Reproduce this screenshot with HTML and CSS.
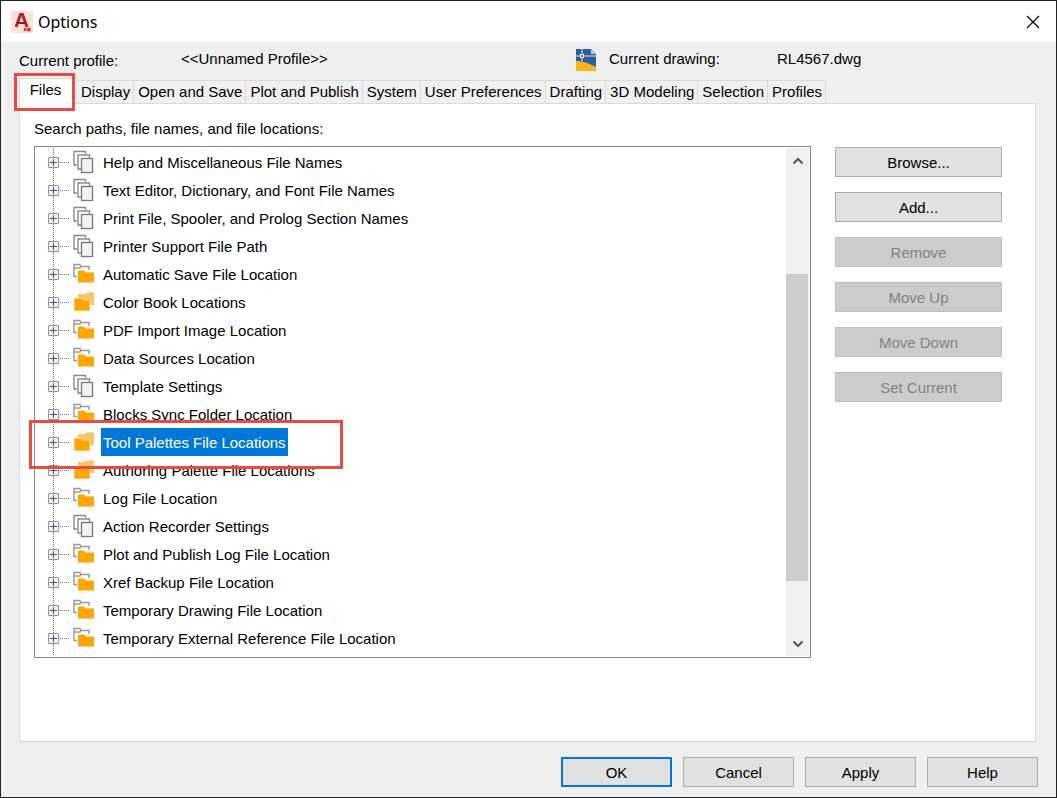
FILE: index.html
```
<!DOCTYPE html>
<html lang="en">
<head>
  <meta charset="utf-8">
  <title>Options</title>
  <link rel="stylesheet" href="styles.css">
</head>
<body>
  <!-- shared icons -->
  <svg class="sprite" aria-hidden="true">
    <symbol id="files" viewBox="0 0 22 24">
      <path d="M4 15H1V1.500H12.500V4" fill="none" stroke="#8a8a8a" stroke-width="1.400"/>
      <path d="M8 19H5V5H16.500V8" fill="none" stroke="#8a8a8a" stroke-width="1.400"/>
      <rect x="8.500" y="8.500" width="11" height="14" fill="#f3f3f3" stroke="#777" stroke-width="1.300"/>
    </symbol>
    <symbol id="folder" viewBox="0 0 22 24">
      <path d="M4 14.500H1V2.500H7L8 4.500H16V8M1 6H7L8 4.500" fill="none" stroke="#999" stroke-width="1.400"/>
      <path d="M5 8.500H11L13 10.500H21V20.500H5Z" fill="#ffa500"/>
    </symbol>
    <symbol id="folders" viewBox="0 0 22 24">
      <path d="M5 4H12L14 2.500H21V15H5Z" fill="#fbc566"/>
      <path d="M1 8H8L10 10H17V21H1Z" fill="#ffa500" stroke="#fff" stroke-width=".6"/>
    </symbol>
  </svg>

  <div class="window">
    <header class="titlebar">
      <svg class="app-icon" viewBox="0 0 22 22">
        <rect width="22" height="22" fill="#fbe3da"/>
        <path d="M5 16L9.500 3.500H11.500L16 16" fill="none" stroke="#b8202c" stroke-width="3"/>
        <path d="M7 12H14" stroke="#8e1722" stroke-width="2"/>
        <path d="M13 17.500L15 19.500M15 17.500L13 19.500M16.500 17.500V19.500H19V17.500Z" fill="none" stroke="#e02030" stroke-width="1.300"/>
      </svg>
      <h1>Options</h1>
      <button class="close" aria-label="Close">
        <svg viewBox="0 0 14 14"><path d="M1 1L13 13M13 1L1 13" fill="none" stroke="#000" stroke-width="1.200"/></svg>
      </button>
    </header>

    <div class="info">
      <span class="profile-label">Current profile:</span>
      <span>&lt;&lt;Unnamed Profile&gt;&gt;</span>
      <svg class="drawing-icon" viewBox="0 0 20 22">
        <path d="M0 0H15L20 5V22H0Z" fill="#2c5f9e"/>
        <path d="M0 12C6 12 10 13 20 18V22H0Z" fill="#fbb41a"/>
        <path d="M15 0V5H20Z" fill="#b9cbe0"/>
        <path d="M6 0V12M0 7H20" stroke="#dce7f3" stroke-width="1"/>
        <rect x="4.500" y="5.500" width="3" height="3" fill="#2c5f9e" stroke="#fff"/>
      </svg>
      <span>Current drawing:</span>
      <span>RL4567.dwg</span>
    </div>

    <div class="tabs" role="tablist">
      <button class="tab active" role="tab" aria-selected="true">Files<span class="callout"></span></button>
      <button class="tab" role="tab">Display</button>
      <button class="tab" role="tab">Open and Save</button>
      <button class="tab" role="tab">Plot and Publish</button>
      <button class="tab" role="tab">System</button>
      <button class="tab" role="tab">User Preferences</button>
      <button class="tab" role="tab">Drafting</button>
      <button class="tab" role="tab">3D Modeling</button>
      <button class="tab" role="tab">Selection</button>
      <button class="tab" role="tab">Profiles</button>
    </div>

    <main class="panel">
      <p id="tree-label">Search paths, file names, and file locations:</p>
      <div class="columns">
        <div class="tree-box">
          <ul class="tree" id="tree" role="tree" aria-labelledby="tree-label"></ul>
          <div class="scrollbar">
            <button aria-label="Scroll up"><svg viewBox="0 0 12 8"><path d="M1.500 6.500L6 2L10.500 6.500" fill="none" stroke="#555" stroke-width="2"/></svg></button>
            <div class="track"><div class="thumb"></div></div>
            <button aria-label="Scroll down"><svg viewBox="0 0 12 8"><path d="M1.500 1.500L6 6L10.500 1.500" fill="none" stroke="#555" stroke-width="2"/></svg></button>
          </div>
        </div>
        <div class="actions">
          <button class="btn">Browse...</button>
          <button class="btn">Add...</button>
          <button class="btn" disabled>Remove</button>
          <button class="btn" disabled>Move Up</button>
          <button class="btn" disabled>Move Down</button>
          <button class="btn" disabled>Set Current</button>
        </div>
      </div>
    </main>

    <footer class="footer">
      <button class="btn default">OK</button>
      <button class="btn">Cancel</button>
      <button class="btn">Apply</button>
      <button class="btn">Help</button>
    </footer>
  </div>

  <script src="script.js"></script>
</body>
</html>
```
FILE: styles.css
```
* {
  box-sizing: border-box;
}

body {
  margin: 0;
  font-family: "Liberation Sans", Arial, sans-serif;
  font-size: 15px;
  line-height: 18px;
  color: #000;
}

button {
  font: inherit;
  color: inherit;
  padding: 0;
}

.sprite {
  position: absolute;
  width: 0;
  height: 0;
}

.window {
  display: flex;
  flex-direction: column;
  min-height: 100vh;
  background-color: #efefef;
  border: 1px solid #222;
}

.titlebar {
  display: flex;
  align-items: center;
  height: 41px;
  padding: 0 16px 0 10px;
  background-color: #fff;
}

.app-icon {
  width: 22px;
  height: 22px;
}

h1 {
  flex: 1;
  margin: 0 0 0 5px;
  font-family: "Noto Sans", sans-serif;
  font-size: 16px;
  font-weight: normal;
}

.close {
  display: flex;
  border: none;
  background: none;
}

.close svg {
  width: 14px;
  height: 14px;
}

.info {
  display: grid;
  grid-template-columns: 162px 395px 33px 168px 1fr;
  padding: 7px 18px 0;
  height: 36px;
}

.info span {
  padding-top: 1px;
}

.info .profile-label {
  padding-top: 3px;
}

.drawing-icon {
  width: 20px;
  height: 22px;
}

.tabs {
  display: flex;
  align-items: flex-end;
  padding: 0 18px;
}

.tab {
  height: 23px;
  padding: 0 3px 0 4px;
  border: 1px solid #dadada;
  border-width: 1px 1px 0 0;
  background-color: #f0f0f0;
}

.tab.active {
  position: relative;
  z-index: 1;
  width: 58px;
  height: 26px;
  margin-bottom: -1px;
  padding: 0 5px 3px 0;
  border-left-width: 1px;
  background-color: #fff;
}

.callout {
  position: absolute;
  z-index: 2;
  border: 3px solid #e94b43;
  pointer-events: none;
}

.tab .callout {
  inset: -6px 1px -7px -6px;
}

.panel {
  flex: 1;
  margin: 0 20px 0 18px;
  padding: 16px 33px 16px 14px;
  background-color: #fff;
  border: 1px solid #dadada;
}

.panel p {
  margin: 0 0 8px;
}

.columns {
  display: flex;
  gap: 24px;
}

.tree-box {
  flex: 1;
  display: flex;
  border: 1px solid #828790;
  padding: 1px;
}

.tree {
  flex: 1;
  margin: 0;
  padding: 0 0 4px;
  list-style: none;
  background: repeating-linear-gradient(#777 0 1px, transparent 1px 2px) 17px 0 / 1px 100% no-repeat;
}

.tree li {
  position: relative;
  display: flex;
  align-items: center;
  height: 28px;
  padding-left: 12px;
}

.expander {
  width: 11px;
  height: 11px;
  border: 1px solid #919191;
  border-radius: 1px;
  background:
    linear-gradient(#3b4fa8, #3b4fa8) center / 7px 1px no-repeat,
    linear-gradient(#3b4fa8, #3b4fa8) center / 1px 7px no-repeat,
    #f4f4f4;
}

.branch {
  width: 10px;
  height: 1px;
  margin: 0 3px 0 1px;
  background: repeating-linear-gradient(90deg, #777 0 1px, transparent 1px 2px);
}

.tree svg {
  width: 22px;
  height: 24px;
}

.name {
  margin-left: 6px;
  padding: 6px 2px 4px;
}

.selected .name {
  background-color: #0078d7;
  color: #fff;
}

.tree .callout {
  top: -8px;
  left: -7px;
  width: 314px;
  height: 49px;
}

.scrollbar {
  display: flex;
  flex-direction: column;
  width: 23px;
  background-color: #f0f0f0;
}

.scrollbar button {
  display: flex;
  align-items: center;
  justify-content: center;
  height: 25px;
  border: none;
  background: none;
}

.scrollbar svg {
  width: 12px;
  height: 8px;
}

.track {
  flex: 1;
}

.thumb {
  width: 22px;
  height: 67%;
  margin-top: 101px;
  background-color: #cdcdcd;
}

.actions {
  display: flex;
  flex-direction: column;
  gap: 15px;
  width: 167px;
  padding-top: 1px;
}

.btn {
  height: 30px;
  padding-top: 2px;
  border: 1px solid #adadad;
  background-color: #e1e1e1;
}

.btn:disabled {
  color: #838383;
  border-color: #bfbfbf;
  background-color: #ccc;
}

.btn.default {
  border: 2px solid #0078d7;
}

.footer {
  display: flex;
  justify-content: flex-end;
  gap: 11px;
  padding: 15px 18px 10px;
}

.footer .btn {
  width: 111px;
}
```
FILE: script.js
```
const items = [
  ["files", "Help and Miscellaneous File Names"],
  ["files", "Text Editor, Dictionary, and Font File Names"],
  ["files", "Print File, Spooler, and Prolog Section Names"],
  ["files", "Printer Support File Path"],
  ["folder", "Automatic Save File Location"],
  ["folders", "Color Book Locations"],
  ["folder", "PDF Import Image Location"],
  ["folder", "Data Sources Location"],
  ["files", "Template Settings"],
  ["folder", "Blocks Sync Folder Location"],
  ["folders", "Tool Palettes File Locations"],
  ["folders", "Authoring Palette File Locations"],
  ["folder", "Log File Location"],
  ["files", "Action Recorder Settings"],
  ["folder", "Plot and Publish Log File Location"],
  ["folder", "Xref Backup File Location"],
  ["folder", "Temporary Drawing File Location"],
  ["folder", "Temporary External Reference File Location"]
];
const selected = 10;

document.getElementById("tree").innerHTML = items.map(([icon, name], i) => `
  <li role="treeitem" aria-expanded="false" class="${i === selected ? "selected" : ""}">
    <span class="expander"></span><span class="branch"></span>
    <svg><use href="#${icon}"/></svg>
    <span class="name">${name}</span>
    ${i === selected ? '<span class="callout"></span>' : ""}
  </li>`).join("");
```
